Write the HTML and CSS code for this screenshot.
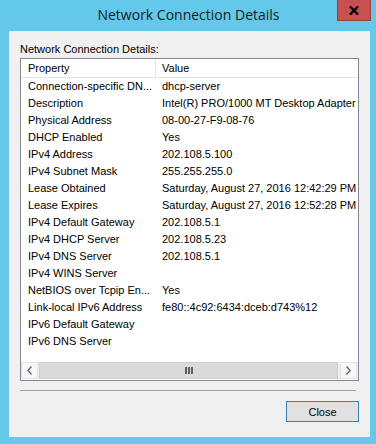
FILE: index.html
```html
<!DOCTYPE html>
<html>
<head>
<meta charset="utf-8">
<link rel="stylesheet" href="styles.css">
</head>
<body>
<div class="window">
  <div class="titlebar">
    <span class="title">Network Connection Details</span>
    <div class="close-x">
      <svg width="10" height="9" viewBox="0 0 10 9"><path d="M1 0.5 L9 8.5 M9 0.5 L1 8.5" stroke="#000" stroke-width="2.4"/></svg>
    </div>
  </div>
  <div class="panel">
    <div class="label">Network Connection Details:</div>
    <div class="listbox">
      <div class="header">
        <div class="hcell prop">Property</div>
        <div class="hcell val">Value</div>
      </div>
      <div class="rows">
        <div class="row"><span class="c1">Connection-specific DN...</span><span class="c2">dhcp-server</span></div>
        <div class="row"><span class="c1">Description</span><span class="c2">Intel(R) PRO/1000 MT Desktop Adapter</span></div>
        <div class="row"><span class="c1">Physical Address</span><span class="c2">08-00-27-F9-08-76</span></div>
        <div class="row"><span class="c1">DHCP Enabled</span><span class="c2">Yes</span></div>
        <div class="row"><span class="c1">IPv4 Address</span><span class="c2">202.108.5.100</span></div>
        <div class="row"><span class="c1">IPv4 Subnet Mask</span><span class="c2">255.255.255.0</span></div>
        <div class="row"><span class="c1">Lease Obtained</span><span class="c2">Saturday, August 27, 2016 12:42:29 PM</span></div>
        <div class="row"><span class="c1">Lease Expires</span><span class="c2">Saturday, August 27, 2016 12:52:28 PM</span></div>
        <div class="row"><span class="c1">IPv4 Default Gateway</span><span class="c2">202.108.5.1</span></div>
        <div class="row"><span class="c1">IPv4 DHCP Server</span><span class="c2">202.108.5.23</span></div>
        <div class="row"><span class="c1">IPv4 DNS Server</span><span class="c2">202.108.5.1</span></div>
        <div class="row"><span class="c1">IPv4 WINS Server</span><span class="c2"></span></div>
        <div class="row"><span class="c1">NetBIOS over Tcpip En...</span><span class="c2">Yes</span></div>
        <div class="row"><span class="c1">Link-local IPv6 Address</span><span class="c2">fe80::4c92:6434:dceb:d743%12</span></div>
        <div class="row"><span class="c1">IPv6 Default Gateway</span><span class="c2"></span></div>
        <div class="row"><span class="c1">IPv6 DNS Server</span><span class="c2"></span></div>
      </div>
      <div class="hscroll">
        <div class="sbtn">
          <svg width="5" height="9" viewBox="0 0 5 9"><polyline points="4.5,0.5 0.8,4.5 4.5,8.5" fill="none" stroke="#606060" stroke-width="1.3"/></svg>
        </div>
        <div class="thumb">
          <svg width="8" height="7" viewBox="0 0 8 7"><rect x="0" y="0" width="2" height="7" fill="#606060"/><rect x="3" y="0" width="2" height="7" fill="#606060"/><rect x="6" y="0" width="2" height="7" fill="#606060"/></svg>
        </div>
        <div class="sbtn">
          <svg width="5" height="9" viewBox="0 0 5 9"><polyline points="0.5,0.5 4.2,4.5 0.5,8.5" fill="none" stroke="#606060" stroke-width="1.3"/></svg>
        </div>
      </div>
    </div>
    <div class="separator"></div>
    <div class="actions">
      <button class="btn">Close</button>
    </div>
  </div>
</div>
</body>
</html>
```

FILE: styles.css
```css
html, body {
  margin: 0;
  padding: 0;
  background: #ffffff;
}
.window {
  width: 376px;
  height: 444px;
  box-sizing: border-box;
  background: #63c8ea;
  padding: 0 6px 7px 9px;
  display: flex;
  flex-direction: column;
}
.titlebar {
  height: 31px;
  flex: none;
  position: relative;
  display: flex;
  justify-content: center;
}
.title {
  font-family: "Open Sans", "Noto Sans", sans-serif;
  font-size: 14px;
  color: #1b1b1b;
  line-height: 30px;
  margin-left: -2px;
}
.close-x {
  position: absolute;
  top: 0;
  right: -1px;
  width: 34px;
  height: 21px;
  box-sizing: border-box;
  background: #c75050;
  border: 1px solid #9e3a3a;
  border-top: none;
  display: flex;
  align-items: center;
  justify-content: center;
}
.close-x svg { display: block; margin-top: 1px; }
.panel {
  flex: 1;
  background: #f0f0f0;
  padding: 12px 11px 15px 11px;
  display: flex;
  flex-direction: column;
  font-family: "Liberation Sans", Arial, sans-serif;
  font-size: 11px;
  color: #000;
}
.label {
  line-height: 13px;
  height: 13px;
}
.listbox {
  margin-top: 2px;
  height: 323px;
  box-sizing: border-box;
  border: 1px solid #828790;
  background: #ffffff;
  display: flex;
  flex-direction: column;
  overflow: hidden;
}
.header {
  height: 19px;
  flex: none;
  box-sizing: border-box;
  border-bottom: 1px solid #e5e5e5;
  display: flex;
}
.hcell {
  line-height: 18px;
  padding-left: 7px;
  box-sizing: border-box;
  white-space: nowrap;
}
.hcell.prop {
  width: 135px;
  border-right: 1px solid #e5e5e5;
}
.hcell.val {
  flex: 1;
  padding-left: 6px;
}
.rows {
  height: 284px;
  flex: none;
  overflow: hidden;
}
.row {
  height: 17px;
  line-height: 17px;
  display: flex;
  white-space: nowrap;
}
.c1 {
  width: 135px;
  flex: none;
  padding-left: 7px;
  box-sizing: border-box;
}
.c2 {
  padding-left: 6px;
}
.hscroll {
  height: 17px;
  flex: none;
  display: flex;
  background: #f0f0f0;
  padding-right: 1px;
}
.sbtn {
  width: 17px;
  height: 17px;
  box-sizing: border-box;
  border: 1px solid #e3e3e3;
  background: #f7f7f7;
  display: flex;
  align-items: center;
  justify-content: center;
  flex: none;
}
.sbtn svg { display: block; }
.thumb {
  flex: 1;
  margin: 0 2px 0 1px;
  box-sizing: border-box;
  background: #dadada;
  border: 1px solid #cdcdcd;
  display: flex;
  align-items: center;
  justify-content: center;
}
.thumb svg { display: block; }
.separator {
  margin-top: 9px;
  margin-right: 3px;
  height: 1px;
  background: #a0a0a0;
  flex: none;
}
.actions {
  margin-top: 10px;
  display: flex;
  justify-content: flex-end;
}
.btn {
  width: 73px;
  height: 21px;
  box-sizing: border-box;
  border: 1px solid #3c7fb1;
  background: #e1e1e1;
  font-family: "Liberation Sans", Arial, sans-serif;
  font-size: 11px;
  color: #000;
  padding: 0;
  margin: 0;
}
```
